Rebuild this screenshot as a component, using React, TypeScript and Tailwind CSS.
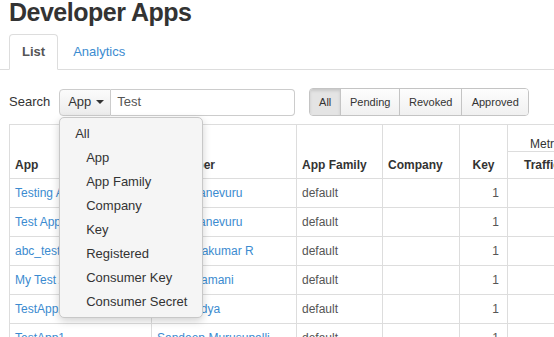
import React from "react";

const rows = [
  { app: "Testing App", dev: "Sai Kodanevuru" },
  { app: "Test App", dev: "Sai Kodanevuru" },
  { app: "abc_test", dev: "Prasannakumar R" },
  { app: "My Test App", dev: "Ravi Swamani" },
  { app: "TestApp2", dev: "Nitin Vaidya" },
  { app: "TestApp1", dev: "Sandeep Murusupalli" },
];

const menu = [
  { label: "All", sub: false },
  { label: "App", sub: true },
  { label: "App Family", sub: true },
  { label: "Company", sub: true },
  { label: "Key", sub: true },
  { label: "Registered", sub: true },
  { label: "Consumer Key", sub: true },
  { label: "Consumer Secret", sub: true },
];

export default function App() {
  return (
    <div
      className="w-[554px] h-[337px] overflow-hidden bg-white text-[#333]"
      style={{ fontFamily: '"Liberation Sans", Arial, sans-serif' }}
    >
      <h1 className="pl-[9px] mt-[-2px] text-[25px] leading-[28px] font-bold tracking-[-0.5px] text-[#333]">
        Developer Apps
      </h1>

      <div className="mt-[9px] flex items-end border-b border-[#ddd] pl-[9px] h-[35px]">
        <div className="h-[36px] -mb-px px-[12px] flex items-center border border-[#ddd] border-b-white rounded-t-[4px] bg-white text-[13px] font-bold text-[#555]">
          List
        </div>
        <div className="h-[35px] px-[15px] flex items-center text-[13px] text-[#3b8bd0]">
          Analytics
        </div>
      </div>

      <div className="mt-[18px] flex items-center pl-[9px] h-[28px]">
        <span className="text-[13px] text-[#333] mr-[9px]">Search</span>
        <div className="relative flex h-[27px]">
          <div className="w-[52px] flex items-center pl-[8px] gap-[5px] border border-[#ccc] rounded-l-[4px] bg-gradient-to-b from-[#fbfbfb] to-[#ececec] text-[13px] text-[#333]">
            App
            <span className="w-0 h-0 border-l-[4px] border-r-[4px] border-t-[4px] border-l-transparent border-r-transparent border-t-[#333]" />
          </div>
          <div className="w-[184px] flex items-center pl-[6px] border border-l-0 border-[#ccc] rounded-r-[4px] text-[13px] text-[#555]">
            Test
          </div>

          <div className="absolute left-0 top-[28px] z-10 w-[144px] h-[201px] pt-[4px] bg-[#f5f5f5] border border-[#c8c8c8] rounded-[5px] shadow-[0_3px_8px_rgba(0,0,0,0.18)]">
            {menu.map((m) => (
              <div
                key={m.label}
                className={`h-[24px] flex items-center text-[13px] text-[#333] ${m.sub ? "pl-[26px]" : "pl-[15px]"}`}
              >
                {m.label}
              </div>
            ))}
          </div>
        </div>

        <div className="ml-[14px] flex h-[28px] border border-[#c4c4c4] rounded-[4px] overflow-hidden text-[11px] text-[#333]">
          <div className="w-[30px] flex items-center justify-center bg-[#e4e4e4] shadow-[inset_0_2px_3px_rgba(0,0,0,0.12)]">
            All
          </div>
          <div className="w-[59px] flex items-center justify-center border-l border-[#c4c4c4] bg-gradient-to-b from-[#fdfdfd] to-[#f0f0f0]">
            Pending
          </div>
          <div className="w-[62px] flex items-center justify-center border-l border-[#c4c4c4] bg-gradient-to-b from-[#fdfdfd] to-[#f0f0f0]">
            Revoked
          </div>
          <div className="w-[67px] flex items-center justify-center border-l border-[#c4c4c4] bg-gradient-to-b from-[#fdfdfd] to-[#f0f0f0]">
            Approved
          </div>
        </div>
      </div>

      <div className="mt-[8px] pl-[9px]">
        <table className="border-collapse table-fixed w-[760px] text-[12px]">
          <colgroup>
            <col className="w-[142px]" />
            <col className="w-[145px]" />
            <col className="w-[86px]" />
            <col className="w-[77px]" />
            <col className="w-[48px]" />
            <col className="w-[90px]" />
            <col className="w-[90px]" />
            <col className="w-[82px]" />
          </colgroup>
          <thead>
            <tr className="h-[27px]">
              <th rowSpan={2} className="border border-[#ddd] align-bottom text-left font-bold pl-[5px] pb-[4px]">App</th>
              <th rowSpan={2} className="border border-[#ddd] align-bottom text-left font-bold pl-[5px] pb-[4px]">Developer</th>
              <th rowSpan={2} className="border border-[#ddd] align-bottom text-left font-bold pl-[5px] pb-[4px]">App Family</th>
              <th rowSpan={2} className="border border-[#ddd] align-bottom text-left font-bold pl-[5px] pb-[4px]">Company</th>
              <th rowSpan={2} className="border border-[#ddd] align-bottom text-center font-bold pb-[4px]">Key</th>
              <th colSpan={3} className="border border-[#ddd] align-bottom text-left font-normal leading-[14px] pl-[22px] pb-0">Metrics</th>
            </tr>
            <tr className="h-[27px]">
              <th className="border border-[#ddd] text-left font-bold pl-[16px]">Traffic</th>
              <th className="border border-[#ddd] text-left font-bold pl-[8px]">Errors</th>
              <th className="border border-[#ddd] text-left font-bold pl-[8px]">Latency</th>
            </tr>
          </thead>
          <tbody>
            {rows.map((r) => (
              <tr key={r.app + r.dev} className="h-[29px]">
                <td className="border border-[#ddd] pl-[5px] text-[#3b8bd0] whitespace-nowrap overflow-hidden">{r.app}</td>
                <td className="border border-[#ddd] pl-[5px] text-[#3b8bd0] whitespace-nowrap overflow-hidden">{r.dev}</td>
                <td className="border border-[#ddd] pl-[5px] text-[#555]">default</td>
                <td className="border border-[#ddd]"></td>
                <td className="border border-[#ddd] text-right pr-[8px] text-[#555]">1</td>
                <td className="border border-[#ddd]"></td>
                <td className="border border-[#ddd]"></td>
                <td className="border border-[#ddd]"></td>
              </tr>
            ))}
          </tbody>
        </table>
      </div>
    </div>
  );
}
